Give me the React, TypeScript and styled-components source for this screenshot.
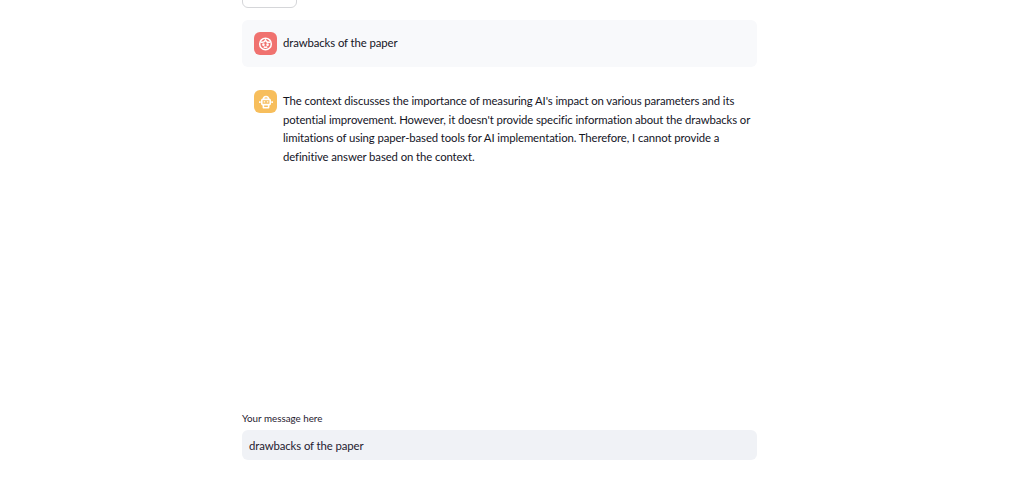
import React, { FunctionComponent, ReactElement, ReactNode } from 'react';
import styled, { createGlobalStyle } from 'styled-components';

const GlobalStyle = createGlobalStyle`
    html, body {
        margin: 0;
        padding: 0;
        background: #ffffff;
        overflow: hidden;
    }
    body {
        font-family: Lato, "Liberation Sans", sans-serif;
        color: #31333f;
    }
`;

const Page = styled.div`
    width: 1024px;
    height: 490px;
    padding-left: 242px;
    box-sizing: border-box;
    display: flex;
    overflow: hidden;
`;

const Column = styled.div`
    width: 515px;
    display: flex;
    flex-direction: column;
    gap: 11px;
`;

const ClippedButton = styled.div`
    width: 55px;
    height: 32px;
    margin-top: -24px;
    margin-bottom: 1px;
    box-sizing: border-box;
    background: #ffffff;
    border: 1px solid #d5d6d9;
    border-radius: 6px;
`;

const Message = styled.div<{ $filled?: boolean }>`
    display: flex;
    gap: 6px;
    padding: 12px 3px 12px 12px;
    border-radius: 6px;
    background: ${({ $filled }) => ($filled ? '#f8f9fb' : 'transparent')};
`;

const Avatar = styled.div<{ $color: string }>`
    width: 23px;
    height: 23px;
    flex: none;
    display: flex;
    align-items: center;
    justify-content: center;
    border-radius: 6px;
    background: ${({ $color }) => $color};
`;

const MessageText = styled.p`
    margin: 0;
    padding-top: 2px;
    font-size: 11.35px;
    letter-spacing: -0.1px;
    line-height: 18.6px;
    color: #14151f;
`;

const InputBlock = styled.div`
    margin-top: auto;
    margin-bottom: 30px;
    display: flex;
    flex-direction: column;
`;

const InputLabel = styled.label`
    font-size: 9.8px;
    line-height: 14px;
    margin-bottom: 5px;
    color: #1f2130;
`;

const InputBox = styled.div`
    height: 30px;
    box-sizing: border-box;
    padding: 0 7px;
    display: flex;
    align-items: center;
    border-radius: 6px;
    background: #f0f2f6;
    font-size: 11.35px;
    letter-spacing: -0.1px;
    color: #1f2130;
`;

const UserIcon: FunctionComponent = (): ReactElement => (
    <svg width="15" height="15" viewBox="0 0 16 16" fill="none" stroke="#fff" strokeWidth="1.6" strokeLinecap="round">
        <circle cx="8" cy="8.500" r="6.200" />
        <path d="M3.500 6.600c2 .5 3.400-.4 4.500-2.300 1 1.900 2.500 2.800 4.500 2.300" />
        <circle cx="5.800" cy="9.200" r=".6" fill="#fff" />
        <circle cx="10.200" cy="9.200" r=".6" fill="#fff" />
        <path d="M6.600 11.700c.8.4 2 .4 2.800 0" />
    </svg>
);

const BotIcon: FunctionComponent = (): ReactElement => (
    <svg width="14" height="14" viewBox="0 0 16 16" fill="none" stroke="#fff" strokeWidth="1.8" strokeLinejoin="round">
        <path d="M5 5c0-2 1.300-3.300 3-3.300S11 3 11 5" />
        <rect x="3.200" y="5" width="9.600" height="6" rx="1" />
        <path d="M1 7v2M15 7v2M5 11v3.500h6V11" />
        <path d="M6.200 7v1.600M9.800 7v1.600" />
    </svg>
);

interface IChatMessage {
    color: string;
    filled?: boolean;
    icon: ReactNode;
    children: ReactNode;
}

const ChatMessage: FunctionComponent<IChatMessage> = ({ color, filled, icon, children }: IChatMessage): ReactElement => (
    <Message $filled={filled}>
        <Avatar $color={color}>{icon}</Avatar>
        <MessageText>{children}</MessageText>
    </Message>
);

const App: FunctionComponent = (): ReactElement => (
    <Page>
        <GlobalStyle />
        <Column>
            <ClippedButton />
            <ChatMessage color="#f0726f" filled icon={<UserIcon />}>
                drawbacks of the paper
            </ChatMessage>
            <ChatMessage color="#f7be5c" icon={<BotIcon />}>
                The context discusses the importance of measuring AI's impact on various parameters and its potential
                improvement. However, it doesn't provide specific information about the drawbacks or limitations of
                using paper-based tools for AI implementation. Therefore, I cannot provide a definitive answer based on
                the context.
            </ChatMessage>
            <InputBlock>
                <InputLabel>Your message here</InputLabel>
                <InputBox>drawbacks of the paper</InputBox>
            </InputBlock>
        </Column>
    </Page>
);

export default App;
